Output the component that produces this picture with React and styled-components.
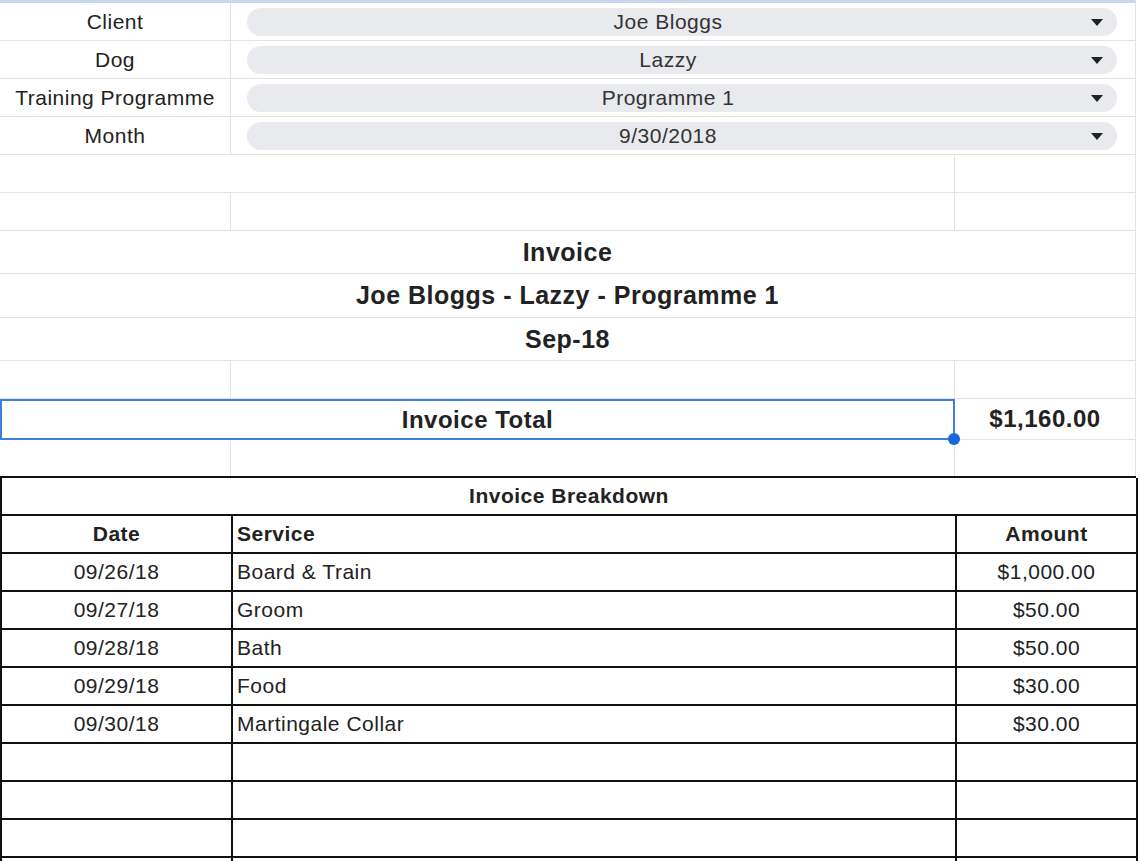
import styled, { createGlobalStyle } from 'styled-components';

const Global = createGlobalStyle`
  body { margin: 0; background: #fff; font-family: 'Liberation Sans', Arial, sans-serif; color: #222; overflow: hidden; letter-spacing: 0.5px; }
`;

const Sheet = styled.div`
  width: 1136px;
  border-top: 3px solid #c9d7ee;
  display: grid;
  grid-template-columns: 231px 724px 181px;
`;

const Cell = styled.div`
  grid-column: span ${p => p.span || 1};
  height: ${p => p.h || 38}px;
  box-sizing: border-box;
  border-right: 1px solid #e2e2e2;
  border-bottom: 1px solid #e2e2e2;
  display: flex;
  align-items: center;
  justify-content: ${p => (p.left ? 'flex-start' : 'center')};
  font-size: ${p => p.size || 21}px;
  font-weight: ${p => (p.bold ? 700 : 400)};
  padding: 0 4px;
  white-space: nowrap;
`;

const DropCell = styled(Cell)`
  padding: 0 18px 0 16px;
`;

const Pill = styled.div`
  flex: 1;
  height: 28px;
  border-radius: 14px;
  background: #e8eaed;
  position: relative;
  display: flex;
  align-items: center;
  justify-content: center;
  padding-right: 28px;
  font-size: 21px;
  color: #333;
  &::after {
    content: '';
    position: absolute;
    right: 14px;
    top: 11px;
    border-left: 6px solid transparent;
    border-right: 6px solid transparent;
    border-top: 7px solid #222;
  }
`;

const TotalCell = styled(Cell)`
  position: relative;
  border: 2px solid #3d7ee0;
  &::after {
    content: '';
    position: absolute;
    right: -7px;
    bottom: -7px;
    width: 12px;
    height: 12px;
    border-radius: 50%;
    background: #1a66d6;
  }
`;

const Table = styled.div`
  grid-column: span 3;
  display: grid;
  grid-template-columns: 231px 724px 181px;
  margin-top: -2px;
  border-top: 2px solid #111;
  border-left: 2px solid #111;
`;

const TCell = styled.div`
  grid-column: span ${p => p.span || 1};
  height: 38px;
  box-sizing: border-box;
  border-right: 2px solid #111;
  border-bottom: 2px solid #111;
  display: flex;
  align-items: center;
  justify-content: ${p => (p.left ? 'flex-start' : 'center')};
  padding: 0 4px;
  font-size: ${p => (p.bold ? 21 : 21)}px;
  font-weight: ${p => (p.bold ? 700 : 400)};
  color: #222;
`;

const selectors = [
  ['Client', 'Joe Bloggs'],
  ['Dog', 'Lazzy'],
  ['Training Programme', 'Programme 1'],
  ['Month', '9/30/2018'],
];

const items = [
  ['09/26/18', 'Board & Train', '$1,000.00'],
  ['09/27/18', 'Groom', '$50.00'],
  ['09/28/18', 'Bath', '$50.00'],
  ['09/29/18', 'Food', '$30.00'],
  ['09/30/18', 'Martingale Collar', '$30.00'],
];

export default function App() {
  return (
    <Sheet>
      <Global />
      {selectors.map(([label, value]) => (
        <>
          <Cell key={label}>{label}</Cell>
          <DropCell span={2}><Pill>{value}</Pill></DropCell>
        </>
      ))}
      <Cell span={2} />
      <Cell />
      <Cell />
      <Cell />
      <Cell />
      <Cell span={3} h={43} bold size={25}>Invoice</Cell>
      <Cell span={3} h={44} bold size={25}>Joe Bloggs - Lazzy - Programme 1</Cell>
      <Cell span={3} h={43} bold size={25}>Sep-18</Cell>
      <Cell />
      <Cell />
      <Cell />
      <TotalCell span={2} h={41} bold size={24}>Invoice Total</TotalCell>
      <Cell h={41} bold size={24}>$1,160.00</Cell>
      <Cell />
      <Cell />
      <Cell />
      <Table>
        <TCell span={3} bold>Invoice Breakdown</TCell>
        <TCell bold>Date</TCell>
        <TCell bold left>Service</TCell>
        <TCell bold>Amount</TCell>
        {items.map(([d, s, a]) => (
          <>
            <TCell key={d}>{d}</TCell>
            <TCell left>{s}</TCell>
            <TCell>{a}</TCell>
          </>
        ))}
        {[0, 1, 2, 3].map(i => (
          <>
            <TCell key={'e' + i} />
            <TCell />
            <TCell />
          </>
        ))}
      </Table>
    </Sheet>
  );
}
